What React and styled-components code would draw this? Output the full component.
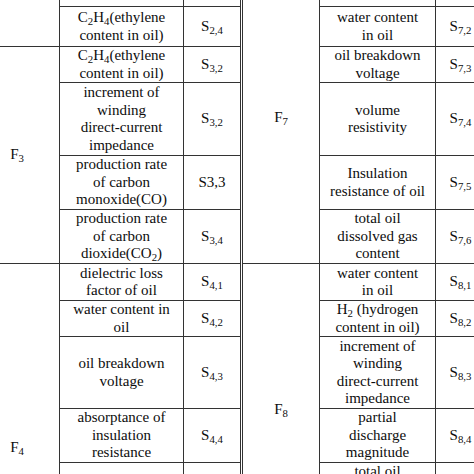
import React from 'react';
import styled, { createGlobalStyle } from 'styled-components';

const GlobalStyle = createGlobalStyle`
  html, body {
    margin: 0;
    padding: 0;
    background: #fff;
  }
  #root {
    width: 474px;
    height: 474px;
    overflow: hidden;
  }
`;

const Page = styled.div`
  width: 474px;
  height: 474px;
  overflow: hidden;
  background: #fff;
  font-family: "Liberation Serif", "Times New Roman", serif;
  font-size: 15px;
  line-height: 17.5px;
  color: #0d0d0d;
`;

// the screenshot is a crop of a bigger table, so it starts above and left of the view
const Table = styled.table`
  border-collapse: collapse;
  table-layout: fixed;
  width: 511px;
  margin-top: -100px;
  margin-left: -26px;

  sub {
    font-size: 0.72em;
    line-height: 0;
    vertical-align: -0.28em;
  }
`;

const Col = styled.col`
  width: ${(p) => p.$w}px;
`;

const Row = styled.tr`
  height: ${(p) => p.$h}px;
`;

const Cell = styled.td`
  border: 1px solid #333;
  padding: 0 4px;
  text-align: center;
  vertical-align: middle;
  white-space: nowrap;
  overflow: hidden;
`;

const LabelCell = styled(Cell)`
  border-left: ${(p) => (p.$inner ? '3px double #333' : '1px solid #333')};
`;

const TextCell = styled(Cell)`
  padding: 0 6px;
`;

const CodeCell = styled(Cell)`
  border-right: ${(p) => (p.$inner ? '3px double #333' : '1px solid #333')};
`;

const Label = ({ n }) => (
  <>
    F<sub>{n}</sub>
  </>
);

const Code = ({ c, plain }) => (plain ? <>S{c}</> : <>S<sub>{c}</sub></>);

const Lines = ({ lines }) =>
  lines.map((l, i) => (
    <React.Fragment key={i}>
      {i > 0 && <br />}
      {l}
    </React.Fragment>
  ));

const C2H4 = [<>C<sub>2</sub>H<sub>4</sub>(ethylene</>, 'content in oil)'];
const impedance = ['increment of', 'winding', 'direct-current', 'impedance'];
const gas = ['total oil', 'dissolved gas', 'content'];

const rows = [
  { h: 71, lf: { n: '2', span: 3 }, lt: ['H₂(hydrogen', 'content in oil)'], ls: '2,2', rf: { n: '6', span: 1 }, rt: gas, rs: '6,4' },
  { h: 35, lt: [<>C<sub>2</sub>H<sub>2</sub>(acetylene)</>], ls: '2,3', rf: { n: '7', span: 6 }, rt: ['oil acidity'], rs: '7,1' },
  { h: 40, lt: C2H4, ls: '2,4', rt: ['water content', 'in oil'], rs: '7,2' },
  { h: 36, lf: { n: '3', span: 4 }, lt: C2H4, ls: '3,2', rt: ['oil breakdown', 'voltage'], rs: '7,3' },
  { h: 73, lt: impedance, ls: '3,2', rt: ['volume', 'resistivity'], rs: '7,4' },
  { h: 54, lt: ['production rate', 'of carbon', 'monoxide(CO)'], ls: '3,3', plain: true, rt: ['Insulation', 'resistance of oil'], rs: '7,5' },
  { h: 54, lt: ['production rate', 'of carbon', <>dioxide(CO<sub>2</sub>)</>], ls: '3,4', rt: gas, rs: '7,6' },
  { h: 37, lf: { n: '4', span: 7 }, lt: ['dielectric loss', 'factor of oil'], ls: '4,1', rf: { n: '8', span: 6 }, rt: ['water content', 'in oil'], rs: '8,1' },
  { h: 36, lt: ['water content in', 'oil'], ls: '4,2', rt: [<>H<sub>2</sub> (hydrogen</>, 'content in oil)'], rs: '8,2' },
  { h: 72, lt: ['oil breakdown', 'voltage'], ls: '4,3', rt: impedance, rs: '8,3' },
  { h: 54, lt: ['absorptance of', 'insulation', 'resistance'], ls: '4,4', rt: ['partial', 'discharge', 'magnitude'], rs: '8,4' },
  { h: 54, lt: ['furfural content', 'in oil'], ls: '4,5', rt: gas, rs: '8,5' },
  { h: 39, lt: ['volume', 'resistivity'], ls: '4,6', rt: ['oil breakdown', 'voltage'], rs: '8,6' },
  { h: 76, lt: ['partial', 'discharge', 'magnitude'], ls: '4,7', rf: { n: '9', span: 1 }, rt: ['water content', 'in oil'], rs: '9,1' },
];

export default function App() {
  return (
    <Page>
      <GlobalStyle />
      <Table>
        <colgroup>
          <Col $w={85} />
          <Col $w={124} />
          <Col $w={58} />
          <Col $w={78} />
          <Col $w={116} />
          <Col $w={50} />
        </colgroup>
        <tbody>
          {rows.map((r, i) => (
            <Row key={i} $h={r.h}>
              {r.lf && (
                <LabelCell rowSpan={r.lf.span}>
                  <Label n={r.lf.n} />
                </LabelCell>
              )}
              <TextCell>
                <Lines lines={r.lt} />
              </TextCell>
              <CodeCell $inner>
                <Code c={r.ls} plain={r.plain} />
              </CodeCell>
              {r.rf && (
                <LabelCell $inner rowSpan={r.rf.span}>
                  <Label n={r.rf.n} />
                </LabelCell>
              )}
              <TextCell>
                <Lines lines={r.rt} />
              </TextCell>
              <CodeCell>
                <Code c={r.rs} />
              </CodeCell>
            </Row>
          ))}
        </tbody>
      </Table>
    </Page>
  );
}
